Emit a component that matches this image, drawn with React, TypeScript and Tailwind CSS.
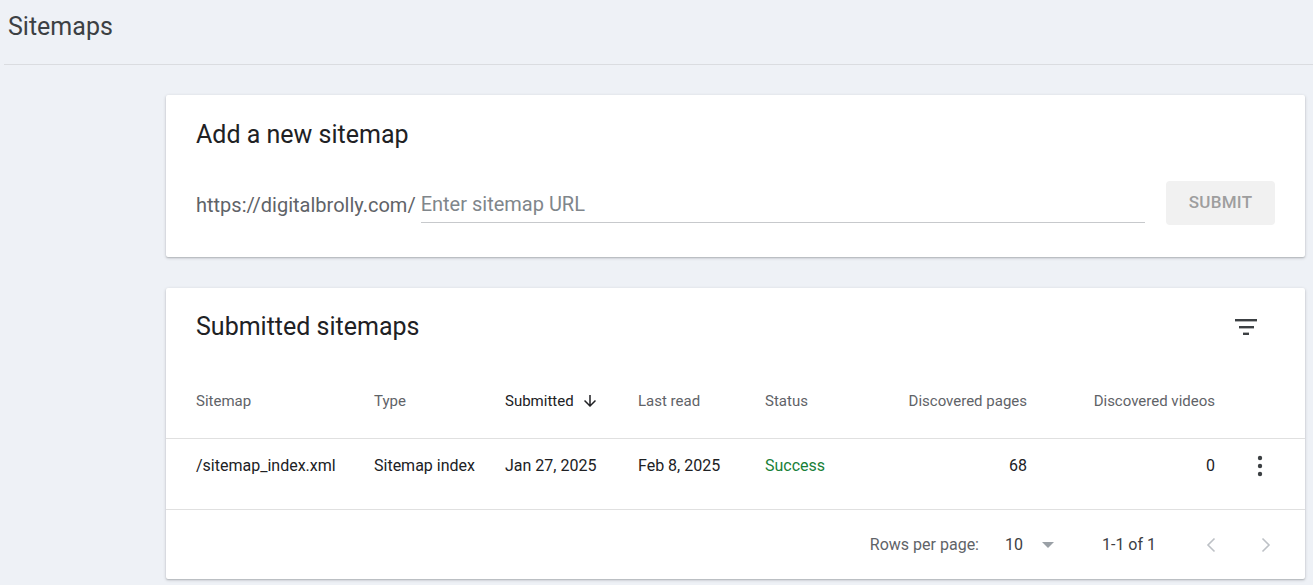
import React from 'react'

const rows = [
  {
    sitemap: '/sitemap_index.xml',
    type: 'Sitemap index',
    submitted: 'Jan 27, 2025',
    lastRead: 'Feb 8, 2025',
    status: 'Success',
    pages: 68,
    videos: 0,
  },
]

const cols = 'grid grid-cols-[178px_131px_133px_127px_100px_162px_188px_1fr] items-center pl-[30px]'

function FilterIcon() {
  return (
    <svg width="22" height="17" viewBox="0 0 22 17" className="text-[#3c4043]">
      <rect x="0" y="0" width="22" height="2.4" fill="currentColor" />
      <rect x="4" y="7" width="15" height="2.4" fill="currentColor" />
      <rect x="8" y="13.6" width="6" height="2.4" fill="currentColor" />
    </svg>
  )
}

function Kebab() {
  return (
    <svg width="6" height="22" viewBox="0 0 6 22" className="text-[#3c4043]">
      <circle cx="3" cy="3" r="2.2" fill="currentColor" />
      <circle cx="3" cy="11" r="2.2" fill="currentColor" />
      <circle cx="3" cy="19" r="2.2" fill="currentColor" />
    </svg>
  )
}

export default function App() {
  return (
    <div className="min-h-[585px] bg-[#eef1f6] font-['Roboto',sans-serif] overflow-hidden">
      <header className="h-[65px] pl-2 ml-1 border-b border-[#dadce0]">
        <h1 className="-ml-1 pt-[13px] text-[25px] leading-[28px] text-[#3c4043]">Sitemaps</h1>
      </header>

      <main className="pl-[166px] pr-2 pt-[30px] space-y-[31px]">
        {/* add sitemap card */}
        <section className="bg-white rounded-[2px] shadow-[0_1px_3px_rgba(60,64,67,0.3),0_1px_1px_rgba(60,64,67,0.12)] pl-[30px] pr-[30px] pt-[26px] pb-[32px]">
          <h2 className="text-[25px] leading-[28px] text-[#202124]">Add a new sitemap</h2>
          <div className="mt-[32px] flex items-center">
            <span className="text-[20px] text-[#5f6368] pt-[4px]">https://digitalbrolly.com/</span>
            <div className="ml-[5px] w-[725px] border-b border-[#c7c9cc] pt-[6px] pb-[3px]">
              <input
                placeholder="Enter sitemap URL"
                className="w-full text-[20px] text-[#202124] placeholder:text-[#80868b] outline-none bg-transparent"
              />
            </div>
            <button className="ml-[21px] h-[44px] w-[109px] rounded-[4px] bg-[#f1f1f1] text-[17px] font-medium tracking-[0.3px] text-[#9e9e9e]">
              SUBMIT
            </button>
          </div>
        </section>

        {/* submitted sitemaps */}
        <section className="bg-white rounded-[2px] shadow-[0_1px_3px_rgba(60,64,67,0.3),0_1px_1px_rgba(60,64,67,0.12)] pt-[25px]">
          <div className="flex items-center justify-between pl-[30px] pr-[48px]">
            <h2 className="text-[25px] leading-[28px] text-[#202124]">Submitted sitemaps</h2>
            <FilterIcon />
          </div>

          <div className={`${cols} mt-[50px] pb-[27px] border-b border-[#e0e0e0] text-[15px] leading-[20px] text-[#5f6368]`}>
            <span>Sitemap</span>
            <span>Type</span>
            <span className="flex items-center gap-[7px] text-[#202124]">
              Submitted
              <svg width="18" height="18" viewBox="0 0 24 24">
                <path d="M20 12l-1.41-1.41L13 16.17V4h-2v12.17l-5.58-5.59L4 12l8 8 8-8z" fill="#202124" />
              </svg>
            </span>
            <span>Last read</span>
            <span>Status</span>
            <span className="text-right">Discovered pages</span>
            <span className="text-right">Discovered videos</span>
            <span />
          </div>

          {rows.map((r) => (
            <div
              key={r.sitemap}
              className={`${cols} pt-[16px] pb-[32px] border-b border-[#e0e0e0] text-[16px] leading-[22px] text-[#202124]`}
            >
              <span>{r.sitemap}</span>
              <span>{r.type}</span>
              <span>{r.submitted}</span>
              <span>{r.lastRead}</span>
              <span className="text-[#188038]">{r.status}</span>
              <span className="text-right">{r.pages}</span>
              <span className="text-right">{r.videos}</span>
              <span className="flex justify-center">
                <Kebab />
              </span>
            </div>
          ))}

          <div className="h-[69px] flex items-center justify-end pr-[34px] text-[16px] text-[#5f6368]">
            <span>Rows per page:</span>
            <span className="ml-[26px] text-[#3c4043]">10</span>
            <svg width="12" height="6" viewBox="0 0 12 6" className="ml-[19px]">
              <path d="M0 0h12L6 6z" fill="#9aa0a6" />
            </svg>
            <span className="ml-[48px] text-[#3c4043]">1-1 of 1</span>
            <svg width="10" height="16" viewBox="0 0 10 16" className="ml-[50px]">
              <path d="M8.5 1.5L2 8l6.5 6.5" stroke="#bdc1c6" strokeWidth="1.6" fill="none" />
            </svg>
            <svg width="10" height="16" viewBox="0 0 10 16" className="ml-[45px]">
              <path d="M1.5 1.5L8 8l-6.5 6.5" stroke="#bdc1c6" strokeWidth="1.6" fill="none" />
            </svg>
          </div>
        </section>
      </main>
    </div>
  )
}
